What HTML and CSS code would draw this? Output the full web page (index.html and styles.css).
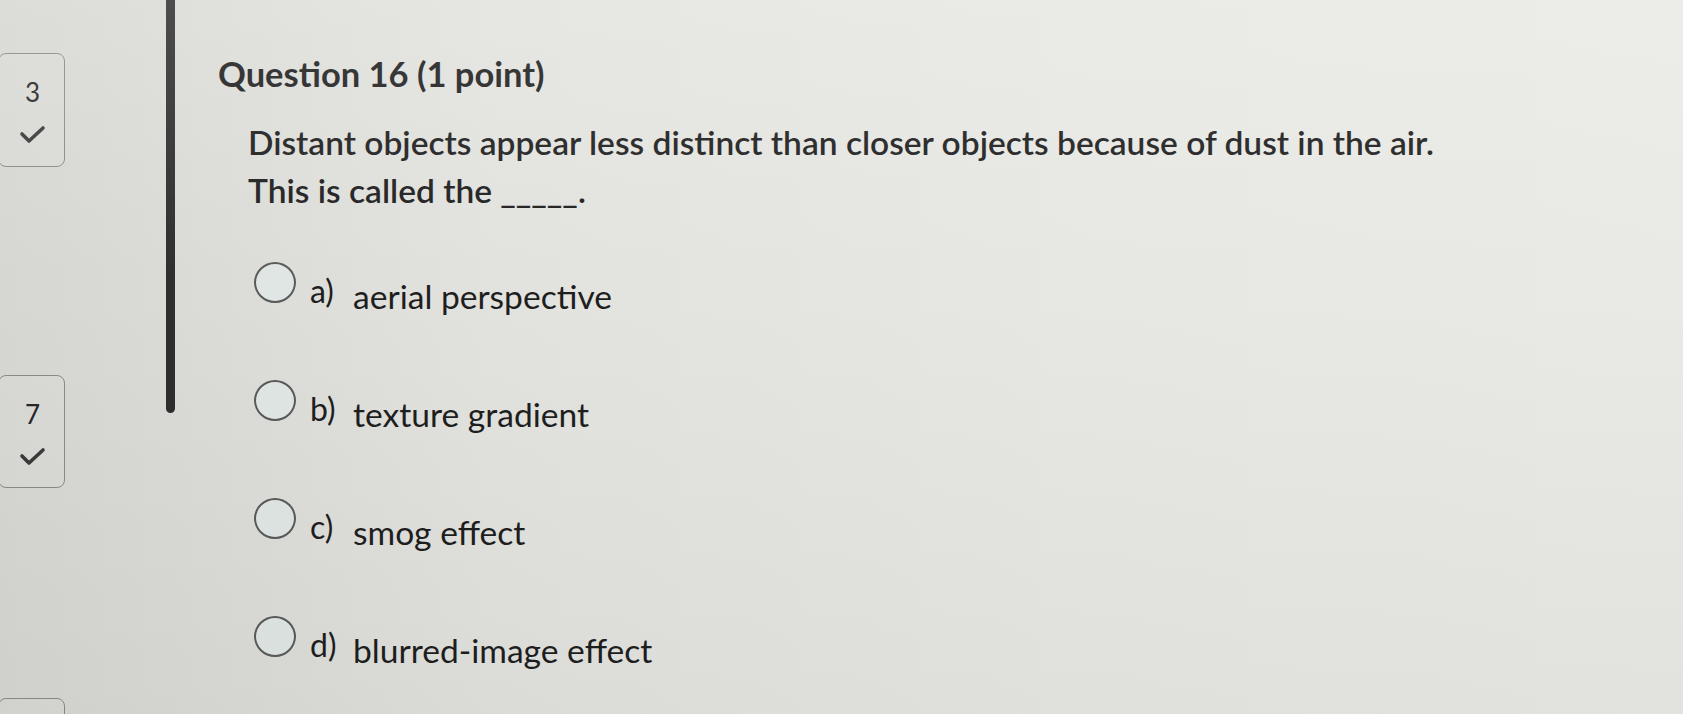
FILE: index.html
```html
<!DOCTYPE html>
<html>
<head>
<meta charset="utf-8">
<link rel="stylesheet" href="styles.css">
</head>
<body>
<div class="page">
  <aside class="sidebar">
    <div class="qbox qbox-first">
      <span class="qnum">3</span>
      <svg class="check" viewBox="0 0 27 20" width="27" height="20"><path d="M3 10 L10 17 L24 4" fill="none" stroke="#3a3a3a" stroke-width="3.6" stroke-linecap="round" stroke-linejoin="round"/></svg>
    </div>
    <div class="qbox qbox-second">
      <span class="qnum">7</span>
      <svg class="check" viewBox="0 0 27 20" width="27" height="20"><path d="M3 10 L10 17 L24 4" fill="none" stroke="#3a3a3a" stroke-width="3.6" stroke-linecap="round" stroke-linejoin="round"/></svg>
    </div>
    <div class="qbox qbox-third"></div>
  </aside>
  <div class="divider"></div>
  <main class="content">
    <h1 class="qtitle">Question 16 (1 point)</h1>
    <p class="qtext">Distant objects appear less distinct than closer objects because of dust in the air.<br>This is called the _____.</p>
    <ul class="options">
      <li class="option"><span class="radio"></span><span class="letter">a)</span><span class="label">aerial perspective</span></li>
      <li class="option"><span class="radio"></span><span class="letter">b)</span><span class="label">texture gradient</span></li>
      <li class="option"><span class="radio"></span><span class="letter">c)</span><span class="label">smog effect</span></li>
      <li class="option"><span class="radio"></span><span class="letter">d)</span><span class="label">blurred-image effect</span></li>
    </ul>
  </main>
</div>
</body>
</html>
```
FILE: styles.css
```css
html, body {
  margin: 0;
  padding: 0;
  width: 1683px;
  height: 714px;
  overflow: hidden;
}
body {
  font-family: Lato, "Liberation Sans", sans-serif;
  color: #1e1e1e;
  background: linear-gradient(90deg, #d6d6d2 0px, #dadad6 170px, #e2e2de 500px, #e7e7e3 1100px, #e9e9e5 1683px);
}
.page {
  display: flex;
  height: 714px;
  position: relative;
}
.page::after {
  content: "";
  position: absolute;
  inset: 0;
  background: linear-gradient(180deg, rgba(255,255,255,0.15) 0%, rgba(255,255,255,0) 40%, rgba(0,0,0,0.03) 100%);
  pointer-events: none;
}
.sidebar {
  width: 166px;
  flex: none;
  display: flex;
  flex-direction: column;
}
.qbox {
  flex: none;
  width: 67px;
  margin-left: -2px;
  border: 1.5px solid #8a8a87;
  border-radius: 8px;
  box-sizing: border-box;
  display: flex;
  flex-direction: column;
  align-items: center;
  background: rgba(255,255,255,0.05);
}
.qbox-first {
  margin-top: 53px;
  height: 114px;
}
.qbox-second {
  margin-top: 208px;
  height: 113px;
}
.qbox-third {
  margin-top: 210px;
  height: 40px;
}
.qnum {
  font-size: 26px;
  margin-top: 25px;
  line-height: 26px;
  color: #262626;
  margin-left: 2px;
}
.check {
  margin-top: 19px;
  margin-left: 2px;
}
.divider {
  width: 9px;
  height: 413px;
  flex: none;
  background: #2e2e2e;
  border-radius: 0 0 5px 5px;
}
.content {
  padding-left: 43px;
  flex: 1;
}
.qtitle {
  margin: 54px 0 0 0;
  font-size: 34.5px;
  font-weight: 700;
  line-height: 40px;
  color: #1e1e1e;
}
.qtext {
  margin: 24px 0 0 30px;
  font-size: 33.5px;
  font-weight: 600;
  line-height: 48px;
  color: #1e1e1e;
}
.options {
  list-style: none;
  margin: 48px 0 0 36px;
  padding: 0;
  display: flex;
  flex-direction: column;
  gap: 77px;
}
.option {
  display: flex;
  align-items: flex-start;
  height: 41px;
  color: #1e1e1e;
}
.radio {
  width: 42px;
  height: 41px;
  box-sizing: border-box;
  border: 2.5px solid #5a5a5a;
  border-radius: 50%;
  background: #dfe6e4;
  flex: none;
}
.letter {
  width: 28px;
  margin-left: 14px;
  margin-top: 12.5px;
  font-size: 32px;
  line-height: 32px;
}
.label {
  margin-left: 15px;
  margin-top: 18px;
  font-size: 33.6px;
  line-height: 33.6px;
}
```
